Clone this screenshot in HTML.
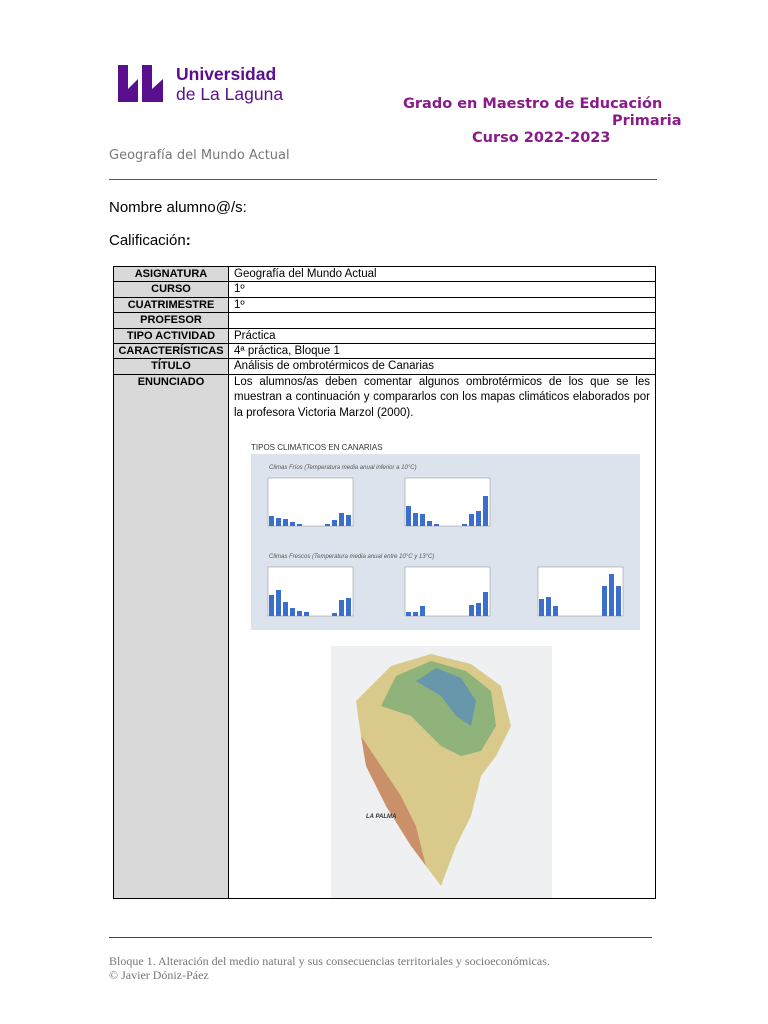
<!DOCTYPE html>
<html><head><meta charset="utf-8"><style>
body{margin:0;background:#fff;width:768px;height:1024px;position:relative;overflow:hidden;font-family:"Liberation Sans",sans-serif}
.a{position:absolute}
.tt{color:#8a1a8a;font-family:"DejaVu Sans",sans-serif;font-weight:bold;font-size:14.5px}
table{position:absolute;left:113px;top:266px;width:543px;border-collapse:collapse;font-family:"Liberation Sans",sans-serif;font-size:11.5px}
td{border:1px solid #000;padding:0 5px;height:14.4px;line-height:14px;vertical-align:top}
td.l{background:#d9d9d9;font-weight:bold;text-align:center;width:114px;padding:0;font-size:11px}
</style></head><body>
<svg class="a" style="left:118px;top:65px" width="50" height="37" viewBox="0 0 50 37"><path d="M0 0h10v24l10-10v23H0z M24 0h10v24l11-10v23H24z" fill="#5a0f8f"/></svg>
<div class="a" style="left:176px;top:64px;color:#5a0f8f;font-size:17.5px;font-weight:bold;line-height:20px">Universidad</div>
<div class="a" style="left:176px;top:84px;color:#5a0f8f;font-size:17.5px;line-height:20px">de La Laguna</div>
<div class="a tt" style="left:403px;top:96px">Grado en Maestro de Educación</div>
<div class="a tt" style="left:612px;top:113px">Primaria</div>
<div class="a tt" style="left:472px;top:130px">Curso 2022-2023</div>
<div class="a" style="left:109px;top:148px;color:#777;font-size:13px;font-family:'DejaVu Sans',sans-serif">Geografía del Mundo Actual</div>
<div class="a" style="left:109px;top:179px;width:548px;border-top:1px solid #555"></div>
<div class="a" style="left:109px;top:199px;font-size:15px">Nombre alumno@/s:</div>
<div class="a" style="left:109px;top:232px;font-size:15px">Calificación<b>:</b></div>
<table>
<tr><td class="l">ASIGNATURA</td><td>Geografía del Mundo Actual</td></tr>
<tr><td class="l">CURSO</td><td>1º</td></tr>
<tr><td class="l">CUATRIMESTRE</td><td>1º</td></tr>
<tr><td class="l">PROFESOR</td><td></td></tr>
<tr><td class="l">TIPO ACTIVIDAD</td><td>Práctica</td></tr>
<tr><td class="l">CARACTERÍSTICAS</td><td>4ª práctica, Bloque 1</td></tr>
<tr><td class="l">TÍTULO</td><td>Análisis de ombrotérmicos de Canarias</td></tr>
<tr><td class="l" style="height:523px">ENUNCIADO</td><td style="text-align:justify;line-height:15.5px">Los alumnos/as deben comentar algunos ombrotérmicos de los que se les muestran a continuación y compararlos con los mapas climáticos elaborados por la profesora Victoria Marzol (2000).</td></tr>
</table>
<svg class="a" style="left:251px;top:434px" width="389" height="196" viewBox="0 0 389 196">
<rect width="389" height="196" fill="#dde3ec"/><rect width="389" height="20" fill="#fff"/>
<text x="0" y="16" font-size="8" fill="#333">TIPOS CLIMÁTICOS EN CANARIAS</text>
<text x="18" y="35" font-size="6" font-style="italic" fill="#555">Climas Fríos (Temperatura media anual inferior a 10°C)</text>
<text x="18" y="124" font-size="6" font-style="italic" fill="#555">Climas Frescos (Temperatura media anual entre 10°C y 13°C)</text>
<g fill="#fff" stroke="#888" stroke-width=".5"><rect x="17" y="44" width="85" height="48"/><rect x="154" y="44" width="85" height="48"/><rect x="17" y="133" width="85" height="49"/><rect x="154" y="133" width="85" height="49"/><rect x="287" y="133" width="85" height="49"/></g>
<g fill="#3a6fd0">
<rect x="18" y="82" width="5" height="10"/><rect x="25" y="84" width="5" height="8"/><rect x="32" y="85" width="5" height="7"/><rect x="39" y="88" width="5" height="4"/><rect x="46" y="90" width="5" height="2"/><rect x="74" y="90" width="5" height="2"/><rect x="81" y="86" width="5" height="6"/><rect x="88" y="79" width="5" height="13"/><rect x="95" y="81" width="5" height="11"/>
<rect x="155" y="72" width="5" height="20"/><rect x="162" y="79" width="5" height="13"/><rect x="169" y="80" width="5" height="12"/><rect x="176" y="87" width="5" height="5"/><rect x="183" y="90" width="5" height="2"/><rect x="211" y="90" width="5" height="2"/><rect x="218" y="80" width="5" height="12"/><rect x="225" y="77" width="5" height="15"/><rect x="232" y="62" width="5" height="30"/>
<rect x="18" y="161" width="5" height="21"/><rect x="25" y="156" width="5" height="26"/><rect x="32" y="168" width="5" height="14"/><rect x="39" y="174" width="5" height="8"/><rect x="46" y="177" width="5" height="5"/><rect x="53" y="178" width="5" height="4"/><rect x="81" y="179" width="5" height="3"/><rect x="88" y="166" width="5" height="16"/><rect x="95" y="164" width="5" height="18"/>
<rect x="155" y="178" width="5" height="4"/><rect x="162" y="178" width="5" height="4"/><rect x="169" y="172" width="5" height="10"/><rect x="218" y="171" width="5" height="11"/><rect x="225" y="169" width="5" height="13"/><rect x="232" y="158" width="5" height="24"/>
<rect x="288" y="165" width="5" height="17"/><rect x="295" y="163" width="5" height="19"/><rect x="302" y="172" width="5" height="10"/><rect x="351" y="152" width="5" height="30"/><rect x="358" y="140" width="5" height="42"/><rect x="365" y="152" width="5" height="30"/>
</g></svg>
<svg class="a" style="left:331px;top:646px" width="221" height="252" viewBox="0 0 221 252">
<rect width="221" height="252" fill="#eef0f2"/>
<path d="M60 20 L100 8 L140 18 L170 40 L180 80 L165 110 L150 130 L140 170 L125 200 L110 240 L95 220 L85 180 L70 150 L50 120 L30 90 L25 55 Z" fill="#d9c98a"/>
<path d="M65 30 L100 15 L135 25 L160 45 L165 80 L150 105 L130 110 L110 100 L80 70 L50 60 Z" fill="#8fb37a"/>
<path d="M85 35 L105 22 L130 32 L145 55 L140 80 L125 70 L110 50 Z" fill="#5e8fb8" opacity=".8"/>
<path d="M30 90 L50 120 L70 150 L85 180 L95 220 L80 200 L55 160 L35 120 Z" fill="#c9906a"/>
<text x="35" y="172" font-size="6" font-weight="bold" font-style="italic" fill="#333">LA PALMA</text>
</svg>
<div class="a" style="left:109px;top:937px;width:543px;border-top:1px solid #444"></div>
<div class="a" style="left:109px;top:954px;color:#777;font-family:'Liberation Serif',serif;font-size:12px;line-height:14px">Bloque 1. Alteración del medio natural y sus consecuencias territoriales y socioeconómicas.<br>© Javier Dóniz-Páez</div>
</body></html>
